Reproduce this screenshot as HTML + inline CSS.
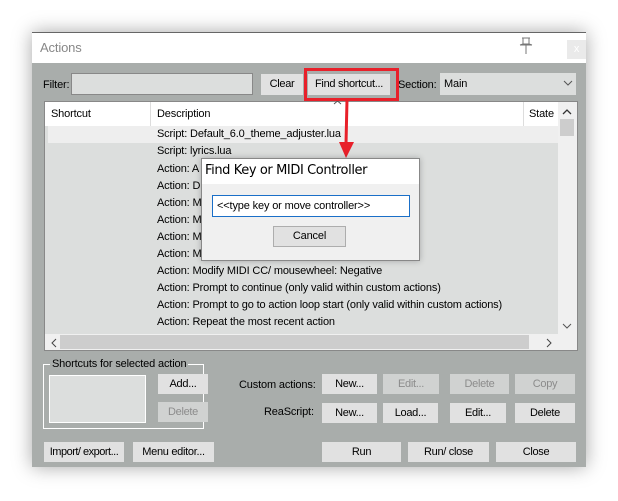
<!DOCTYPE html><html><head><style>
*{box-sizing:border-box;margin:0;padding:0}
body{width:618px;height:501px;background:#fff;font-family:"Liberation Sans",sans-serif;font-size:11px;letter-spacing:-0.15px;color:#000;position:relative;overflow:hidden;white-space:nowrap}
.a{position:absolute}
.btn{position:absolute;background:#e1e1e1;text-align:center;line-height:20px;font-size:11px;letter-spacing:-0.3px}
.dis{color:#8c8c8c;background:#d0d2d1}
.row{position:absolute;left:157px;font-size:11px}
</style></head><body>
<div class="a" style="left:32px;top:32px;width:554px;height:435px;background:#a9adab;box-shadow:0 0 18px rgba(0,0,0,.35);border-top:1px solid #666"></div>
<div class="a" style="left:32px;top:33px;width:554px;height:30px;background:#fff"></div>
<div class="a" style="left:40px;top:40px;font-size:13px;color:#888">Actions</div>
<svg class="a" style="left:518px;top:37px" width="16" height="18" viewBox="0 0 16 18"><path d="M4 1h8M5 1v6M11 1v6M2 8h12M5 7h6M8 8v9M2 8l3-1M14 8l-3-1" stroke="#777" fill="none"/></svg>
<div class="a" style="left:567px;top:40px;width:19px;height:19px;background:#eaeaea;color:#fff;text-align:center;font-size:11px;line-height:19px">x</div>
<div class="a" style="left:43px;top:79px">Filter:</div>
<div class="a" style="left:71px;top:73px;width:182px;height:22px;background:#dcdedd;border:1px solid #888"></div>
<div class="btn" style="left:261px;top:74px;width:42px;height:21px">Clear</div>
<div class="btn" style="left:308px;top:74px;width:82px;height:21px">Find shortcut...</div>
<div class="a" style="left:398px;top:79px">Section:</div>
<div class="a" style="left:440px;top:73px;width:136px;height:22px;background:#dcdedd"></div>
<div class="a" style="left:444px;top:78px">Main</div>
<svg class="a" style="left:563px;top:80px" width="10" height="6"><path d="M1 1l4 4 4-4" stroke="#555" fill="none"/></svg>
<div class="a" style="left:44px;top:101px;width:534px;height:250px;background:#dcdedd;border:1px solid #888"></div>
<div class="a" style="left:45px;top:102px;width:513px;height:24px;background:#fff"></div>
<div class="a" style="left:150px;top:102px;width:1px;height:24px;background:#ddd"></div>
<div class="a" style="left:523px;top:102px;width:1px;height:24px;background:#ddd"></div>
<div class="a" style="left:51px;top:108px">Shortcut</div>
<div class="a" style="left:157px;top:108px">Description</div>
<div class="a" style="left:529px;top:108px">State</div>
<svg class="a" style="left:333px;top:100px" width="9" height="5"><path d="M1 4l3.5-3 3.5 3" stroke="#555" fill="none"/></svg>
<div class="a" style="left:558px;top:102px;width:19px;height:232px;background:#f0f0f0"></div>
<div class="a" style="left:560px;top:119px;width:14px;height:17px;background:#cdcdcd"></div>
<svg class="a" style="left:562px;top:109px" width="10" height="6"><path d="M1 5l4-4 4 4" stroke="#333" fill="none" stroke-width="1.3"/></svg>
<svg class="a" style="left:562px;top:323px" width="10" height="6"><path d="M1 1l4 4 4-4" stroke="#555" fill="none"/></svg>
<div class="a" style="left:48px;top:126px;width:510px;height:17px;background:#eeeeee"></div>
<div class="row" style="top:128px">Script: Default_6.0_theme_adjuster.lua</div>
<div class="row" style="top:145px">Script: lyrics.lua</div>
<div class="row" style="top:163px">Action: A</div>
<div class="row" style="top:180px">Action: D</div>
<div class="row" style="top:197px">Action: M</div>
<div class="row" style="top:214px">Action: M</div>
<div class="row" style="top:231px">Action: M</div>
<div class="row" style="top:248px">Action: M</div>
<div class="row" style="top:265px">Action: Modify MIDI CC/ mousewheel: Negative</div>
<div class="row" style="top:282px">Action: Prompt to continue (only valid within custom actions)</div>
<div class="row" style="top:299px">Action: Prompt to go to action loop start (only valid within custom actions)</div>
<div class="row" style="top:316px">Action: Repeat the most recent action</div>
<div class="a" style="left:45px;top:334px;width:532px;height:16px;background:#f0f0f0"></div>
<div class="a" style="left:60px;top:335px;width:469px;height:14px;background:#cdcdcd"></div>
<svg class="a" style="left:51px;top:338px" width="6" height="10"><path d="M5 1L1 5l4 4" stroke="#444" fill="none"/></svg>
<svg class="a" style="left:546px;top:338px" width="6" height="10"><path d="M1 1l4 4-4 4" stroke="#444" fill="none"/></svg>
<div class="a" style="left:43px;top:364px;width:161px;height:65px;border:1px solid #fff"></div>
<div class="a" style="left:50px;top:358px;background:#a9adab;padding:0 2px">Shortcuts for selected action</div>
<div class="a" style="left:49px;top:375px;width:97px;height:48px;background:#dcdedd;border:1px solid #fff"></div>
<div class="btn" style="left:158px;top:374px;width:50px;height:20px">Add...</div>
<div class="btn dis" style="left:158px;top:402px;width:50px;height:20px">Delete</div>
<div class="a" style="left:239px;top:379px">Custom actions:</div>
<div class="a" style="left:264px;top:406px">ReaScript:</div>
<div class="btn" style="left:322px;top:374px;width:55px;height:20px">New...</div>
<div class="btn dis" style="left:383px;top:374px;width:56px;height:20px">Edit...</div>
<div class="btn dis" style="left:450px;top:374px;width:59px;height:20px">Delete</div>
<div class="btn dis" style="left:515px;top:374px;width:60px;height:20px">Copy</div>
<div class="btn" style="left:322px;top:403px;width:55px;height:20px">New...</div>
<div class="btn" style="left:383px;top:403px;width:55px;height:20px">Load...</div>
<div class="btn" style="left:450px;top:403px;width:56px;height:20px">Edit...</div>
<div class="btn" style="left:515px;top:403px;width:60px;height:20px">Delete</div>
<div class="btn" style="left:44px;top:442px;width:80px;height:20px;letter-spacing:-0.5px">Import/ export...</div>
<div class="btn" style="left:133px;top:442px;width:81px;height:20px">Menu editor...</div>
<div class="btn" style="left:322px;top:442px;width:79px;height:20px">Run</div>
<div class="btn" style="left:408px;top:442px;width:81px;height:20px">Run/ close</div>
<div class="btn" style="left:496px;top:442px;width:80px;height:20px">Close</div>
<div class="a" style="left:304px;top:68px;width:95px;height:33px;border:3px solid #e8202a"></div>
<svg class="a" style="left:335px;top:100px" width="24" height="62"><path d="M12 0L11 44" stroke="#e8202a" stroke-width="3"/><path d="M4 42L11 58L19 42Z" fill="#e8202a"/></svg>
<div class="a" style="left:201px;top:158px;width:219px;height:103px;background:#f0f0f0;border:1px solid #888;box-shadow:0 0 6px rgba(0,0,0,.25)"></div>
<div class="a" style="left:202px;top:159px;width:217px;height:25px;background:#fff"></div>
<div class="a" style="left:205px;top:163px;font-size:13px;font-family:'DejaVu Sans',sans-serif;letter-spacing:-0.4px">Find Key or MIDI Controller</div>
<div class="a" style="left:212px;top:195px;width:198px;height:22px;background:#fff;border:1px solid #1a6fc8;padding:4px 4px;font-size:11px">&lt;&lt;type key or move controller&gt;&gt;</div>
<div class="a" style="left:273px;top:226px;width:73px;height:21px;background:#e1e1e1;border:1px solid #adadad;text-align:center;line-height:19px">Cancel</div>
</body></html>
